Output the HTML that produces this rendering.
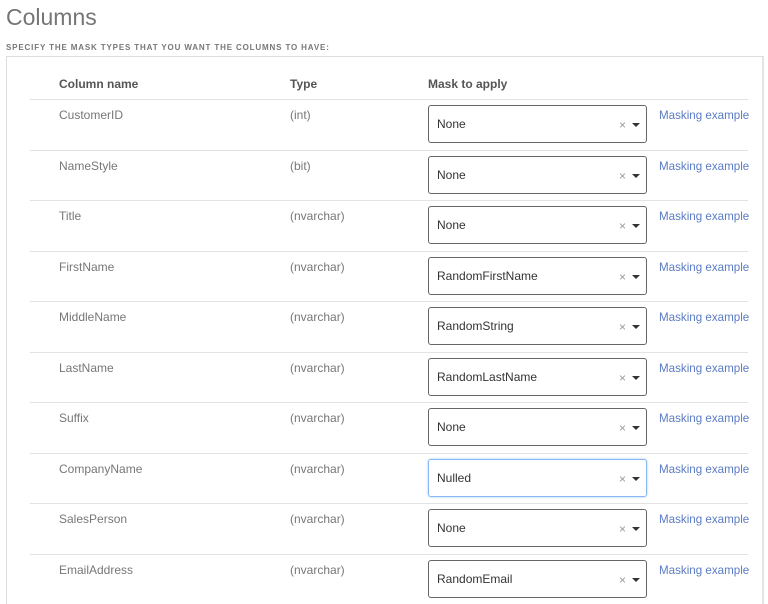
<!DOCTYPE html><html><head><style>
html,body{margin:0;width:768px;height:604px;overflow:hidden}
body{background:#fff;font-family:"Liberation Sans",sans-serif;position:relative}
.t{position:absolute;left:6px;top:4px;font-size:23px;color:#757575;font-weight:300}
.s{position:absolute;left:6px;top:43px;font-size:8px;font-weight:bold;color:#777;letter-spacing:0.85px}
.box{position:absolute;left:6px;top:56px;width:755px;height:560px;border:1px solid #ddd;border-right:2px solid #e4e4e4}
.h{position:absolute;top:77px;font-size:12px;font-weight:bold;color:#555}
.line{position:absolute;left:30px;width:718px;height:1px;background:#e3e3e3}
.c{position:absolute;font-size:12px;color:#777}
.sel{position:absolute;left:428px;width:217px;height:36px;border:1px solid #666;border-radius:3px}
.sel span{position:absolute;left:8px;top:11px;font-size:12px;color:#333}
.sel .x{position:absolute;left:190px;top:12px;font-size:12px;color:#999;font-weight:normal}
.sel .a{position:absolute;left:203px;top:17px;width:0;height:0;border-left:4px solid transparent;border-right:4px solid transparent;border-top:4px solid #333}
.m{position:absolute;left:659px;font-size:11.6px;color:#5a7bc4}
</style></head><body>
<div class="t">Columns</div>
<div class="s">SPECIFY THE MASK TYPES THAT YOU WANT THE COLUMNS TO HAVE:</div>
<div class="box"></div>
<div class="h" style="left:59px">Column name</div>
<div class="h" style="left:290px">Type</div>
<div class="h" style="left:428px">Mask to apply</div>
<div id="rows"></div>
<script>
var d=[["CustomerID","(int)","None"],["NameStyle","(bit)","None"],["Title","(nvarchar)","None"],["FirstName","(nvarchar)","RandomFirstName"],["MiddleName","(nvarchar)","RandomString"],["LastName","(nvarchar)","RandomLastName"],["Suffix","(nvarchar)","None"],["CompanyName","(nvarchar)","Nulled"],["SalesPerson","(nvarchar)","None"],["EmailAddress","(nvarchar)","RandomEmail"]];
var h="";d.forEach(function(r,i){var y=99+i*50.5;
h+='<div class="line" style="top:'+Math.round(y)+'px"></div>';
h+='<div class="c" style="left:59px;top:'+Math.round(y+9)+'px">'+r[0]+'</div>';
h+='<div class="c" style="left:290px;top:'+Math.round(y+9)+'px">'+r[1]+'</div>';
var f=i==7?'border-color:#8ab8f0;box-shadow:0 0 2px #9cc4f5;':'';
h+='<div class="sel" style="top:'+Math.round(y+6)+'px;'+f+'"><span>'+r[2]+'</span><b class="x">×</b><i class="a"></i></div>';
h+='<div class="m" style="top:'+Math.round(y+10)+'px">Masking example</div>';});
document.getElementById("rows").innerHTML=h;
</script>
</body></html>
